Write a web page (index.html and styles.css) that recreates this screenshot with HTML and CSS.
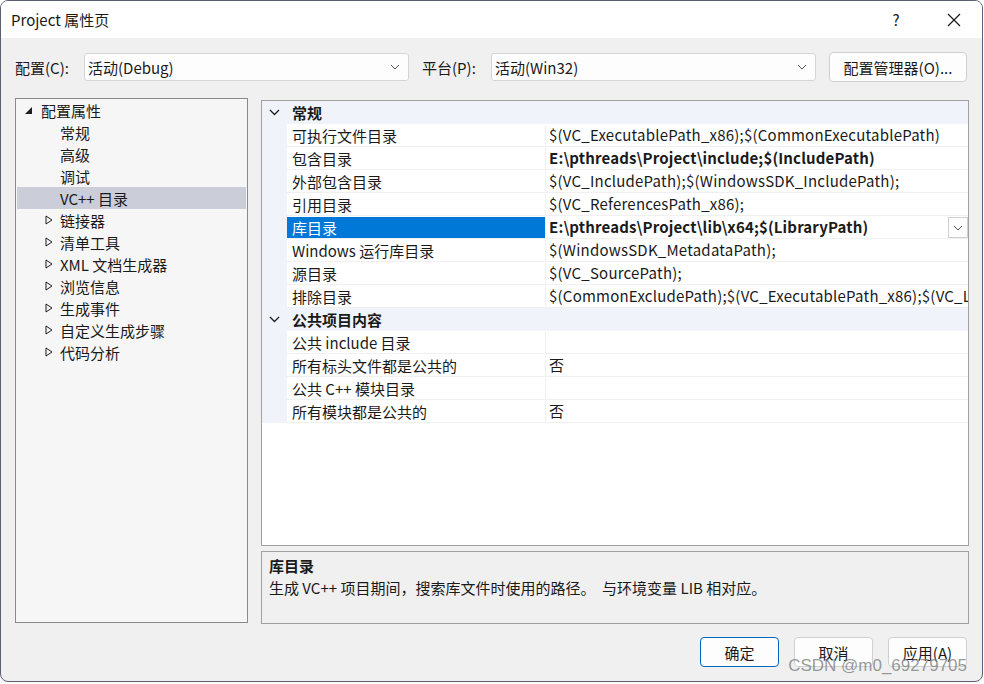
FILE: index.html
```html
<!DOCTYPE html>
<html lang="zh-CN">
<head>
  <meta charset="UTF-8">
  <title>Project 属性页</title>
  <link rel="stylesheet" href="styles.css">
</head>
<body>
  <div class="window">
    <div class="titlebar">
      <span class="title">Project 属性页</span>
      <span class="help">?</span>
      <span class="close">
        <svg width="14" height="14" viewBox="0 0 14 14"><path d="M1 1L13 13M13 1L1 13" stroke="#1a1a1a" stroke-width="1.2" fill="none"/></svg>
      </span>
    </div>

    <div class="content">
      <div class="toolbar">
        <label class="lbl">配置(C):</label>
        <div class="combo">
          <span>活动(Debug)</span>
          <svg class="chev" width="10" height="6" viewBox="0 0 10 6"><path d="M1 1L5 5L9 1" stroke="#555" fill="none"/></svg>
        </div>
        <label class="lbl lbl-platform">平台(P):</label>
        <div class="combo">
          <span>活动(Win32)</span>
          <svg class="chev" width="10" height="6" viewBox="0 0 10 6"><path d="M1 1L5 5L9 1" stroke="#555" fill="none"/></svg>
        </div>
        <button class="btn btn-manager">配置管理器(O)...</button>
      </div>

      <div class="main">
        <div class="tree">
          <div class="tree-item lvl0">
            <svg class="tri" width="9" height="9" viewBox="0 0 9 9"><path d="M8 1L8 8L1 8Z" fill="#1e1e1e"/></svg>
            <span>配置属性</span>
          </div>
          <div class="tree-item lvl1">常规</div>
          <div class="tree-item lvl1">高级</div>
          <div class="tree-item lvl1">调试</div>
          <div class="tree-item lvl1 selected">VC++ 目录</div>
          <div class="tree-item lvl1c"><svg class="tri" width="8" height="10" viewBox="0 0 8 10"><path d="M1 1L7 5L1 9Z" fill="none" stroke="#1e1e1e"/></svg><span>链接器</span></div>
          <div class="tree-item lvl1c"><svg class="tri" width="8" height="10" viewBox="0 0 8 10"><path d="M1 1L7 5L1 9Z" fill="none" stroke="#1e1e1e"/></svg><span>清单工具</span></div>
          <div class="tree-item lvl1c"><svg class="tri" width="8" height="10" viewBox="0 0 8 10"><path d="M1 1L7 5L1 9Z" fill="none" stroke="#1e1e1e"/></svg><span>XML 文档生成器</span></div>
          <div class="tree-item lvl1c"><svg class="tri" width="8" height="10" viewBox="0 0 8 10"><path d="M1 1L7 5L1 9Z" fill="none" stroke="#1e1e1e"/></svg><span>浏览信息</span></div>
          <div class="tree-item lvl1c"><svg class="tri" width="8" height="10" viewBox="0 0 8 10"><path d="M1 1L7 5L1 9Z" fill="none" stroke="#1e1e1e"/></svg><span>生成事件</span></div>
          <div class="tree-item lvl1c"><svg class="tri" width="8" height="10" viewBox="0 0 8 10"><path d="M1 1L7 5L1 9Z" fill="none" stroke="#1e1e1e"/></svg><span>自定义生成步骤</span></div>
          <div class="tree-item lvl1c"><svg class="tri" width="8" height="10" viewBox="0 0 8 10"><path d="M1 1L7 5L1 9Z" fill="none" stroke="#1e1e1e"/></svg><span>代码分析</span></div>
        </div>

        <div class="right">
          <div class="grid">
            <div class="cat">
              <span class="gutter"><svg width="11" height="7" viewBox="0 0 11 7"><path d="M1 1L5.5 5.5L10 1" stroke="#1e1e1e" stroke-width="1.3" fill="none"/></svg></span>
              <span class="cat-name">常规</span>
            </div>
            <div class="prop"><span class="gutter"></span><span class="name">可执行文件目录</span><span class="val">$(VC_ExecutablePath_x86);$(CommonExecutablePath)</span></div>
            <div class="prop"><span class="gutter"></span><span class="name">包含目录</span><span class="val bold">E:\pthreads\Project\include;$(IncludePath)</span></div>
            <div class="prop"><span class="gutter"></span><span class="name">外部包含目录</span><span class="val">$(VC_IncludePath);$(WindowsSDK_IncludePath);</span></div>
            <div class="prop"><span class="gutter"></span><span class="name">引用目录</span><span class="val">$(VC_ReferencesPath_x86);</span></div>
            <div class="prop active"><span class="gutter"></span><span class="name">库目录</span><span class="val bold">E:\pthreads\Project\lib\x64;$(LibraryPath)</span>
              <span class="dd"><svg width="10" height="6" viewBox="0 0 10 6"><path d="M1 1L5 5L9 1" stroke="#555" fill="none"/></svg></span>
            </div>
            <div class="prop"><span class="gutter"></span><span class="name">Windows 运行库目录</span><span class="val">$(WindowsSDK_MetadataPath);</span></div>
            <div class="prop"><span class="gutter"></span><span class="name">源目录</span><span class="val">$(VC_SourcePath);</span></div>
            <div class="prop"><span class="gutter"></span><span class="name">排除目录</span><span class="val">$(CommonExcludePath);$(VC_ExecutablePath_x86);$(VC_LibraryPath_x86)</span></div>
            <div class="cat">
              <span class="gutter"><svg width="11" height="7" viewBox="0 0 11 7"><path d="M1 1L5.5 5.5L10 1" stroke="#1e1e1e" stroke-width="1.3" fill="none"/></svg></span>
              <span class="cat-name">公共项目内容</span>
            </div>
            <div class="prop"><span class="gutter"></span><span class="name">公共 include 目录</span><span class="val"></span></div>
            <div class="prop"><span class="gutter"></span><span class="name">所有标头文件都是公共的</span><span class="val">否</span></div>
            <div class="prop"><span class="gutter"></span><span class="name">公共 C++ 模块目录</span><span class="val"></span></div>
            <div class="prop"><span class="gutter"></span><span class="name">所有模块都是公共的</span><span class="val">否</span></div>
          </div>

          <div class="desc">
            <div class="desc-title">库目录</div>
            <div class="desc-text">生成 VC++ 项目期间，搜索库文件时使用的路径。&nbsp; 与环境变量 LIB 相对应。</div>
          </div>
        </div>
      </div>

      <div class="footer">
        <button class="btn btn-default">确定</button>
        <button class="btn">取消</button>
        <button class="btn">应用(A)</button>
        <span class="watermark">CSDN @m0_69279705</span>
      </div>
    </div>
  </div>
</body>
</html>
```

FILE: styles.css
```css
html, body {
  margin: 0;
  padding: 0;
  background: #ffffff;
}

body {
  font-family: "Segoe UI", "Noto Sans CJK SC", sans-serif;
  font-size: 15px;
  color: #1a1a1a;
}

.window {
  width: 983px;
  height: 682px;
  box-sizing: border-box;
  border: 1px solid #5a5f76;
  border-radius: 8px;
  background: #f0f0f0;
  overflow: hidden;
  display: flex;
  flex-direction: column;
}

.titlebar {
  height: 37px;
  background: #ffffff;
  display: flex;
  align-items: center;
  flex-shrink: 0;
}

.title {
  margin-left: 10px;
  flex: 1;
  color: #1a1a1a;
}

.help {
  width: 20px;
  margin-right: 38px;
  text-align: center;
}

.close {
  width: 20px;
  margin-right: 18px;
  display: flex;
  justify-content: center;
}

.content {
  flex: 1;
  padding: 14px 13px 0 14px;
  display: flex;
  flex-direction: column;
}

.toolbar {
  display: flex;
  align-items: center;
  height: 30px;
}

.lbl {
  width: 69px;
  flex-shrink: 0;
}

.lbl-platform {
  margin-left: 13px;
}

.combo {
  width: 325px;
  height: 28px;
  flex-shrink: 0;
  box-sizing: border-box;
  background: #fdfdfd;
  border: 1px solid #d5d5d5;
  border-radius: 3px;
  display: flex;
  align-items: center;
  padding: 0 8px 0 3px;
}

.combo span {
  flex: 1;
}

.btn {
  font-family: inherit;
  font-size: 15px;
  color: #1a1a1a;
  background: #fdfdfd;
  border: 1px solid #d0d0d0;
  border-radius: 4px;
  height: 30px;
  width: 79px;
  padding: 0;
}

.btn-manager {
  margin-left: 13px;
  width: 138px;
}

.main {
  display: flex;
  margin-top: 16px;
  height: 526px;
}

.tree {
  width: 233px;
  height: 525px;
  flex-shrink: 0;
  box-sizing: border-box;
  background: #f6f6f6;
  border: 1px solid #8a8a8a;
}

.tree-item {
  height: 22px;
  display: flex;
  align-items: center;
  margin: 0 1px;
}

.tree-item.lvl0 {
  padding-left: 7px;
}

.tree-item.lvl0 .tri {
  margin-right: 8px;
}

.tree-item.lvl1 {
  padding-left: 43px;
}

.tree-item.lvl1c {
  padding-left: 28px;
}

.tree-item.lvl1c .tri {
  margin-right: 7px;
}

.tree-item.selected {
  background: #cbcdd9;
}

.right {
  width: 708px;
  flex-shrink: 0;
  margin-left: 13px;
  display: flex;
  flex-direction: column;
  margin-top: 2px;
}

.grid {
  height: 446px;
  box-sizing: border-box;
  background: #ffffff;
  border: 1px solid #a0a0a0;
}

.cat, .prop {
  height: 23px;
  display: flex;
  align-items: center;
  position: relative;
}

.cat {
  background: #f0f4fa;
  font-weight: bold;
}

.gutter {
  width: 25px;
  height: 23px;
  background: #f0f4fa;
  flex-shrink: 0;
  display: flex;
  align-items: center;
  justify-content: center;
}

.cat-name {
  padding-left: 5px;
}

.prop .name {
  width: 259px;
  height: 22px;
  line-height: 22px;
  padding-left: 5px;
  box-sizing: border-box;
  border-right: 1px solid #f0f0f0;
  border-bottom: 1px solid #f0f0f0;
  flex-shrink: 0;
  white-space: nowrap;
}

.prop .val {
  flex: 1;
  height: 22px;
  line-height: 22px;
  padding-left: 3px;
  border-bottom: 1px solid #f0f0f0;
  white-space: nowrap;
  overflow: hidden;
  letter-spacing: 0.22px;
}

.prop .val.bold {
  font-weight: bold;
  letter-spacing: 0.15px;
}

.prop.active .name {
  background: #0078d7;
  color: #ffffff;
}

.dd {
  position: absolute;
  right: 0;
  top: 1px;
  width: 20px;
  height: 21px;
  box-sizing: border-box;
  border: 1px solid #d0d0d0;
  background: #fdfdfd;
  display: flex;
  align-items: center;
  justify-content: center;
}

.desc {
  margin-top: 5px;
  height: 73px;
  box-sizing: border-box;
  border: 1px solid #a0a0a0;
  padding: 3px 7px;
}

.desc-title {
  font-weight: bold;
  height: 22px;
}

.footer {
  display: flex;
  justify-content: flex-end;
  gap: 15px;
  margin-top: 13px;
  margin-right: 2px;
  position: relative;
}

.btn-default {
  border: 1px solid #0067c0;
}

.watermark {
  position: absolute;
  right: 0;
  top: 19px;
  color: rgba(120, 120, 120, 0.75);
  font-family: "Liberation Sans", sans-serif;
  font-size: 17px;
}
```
